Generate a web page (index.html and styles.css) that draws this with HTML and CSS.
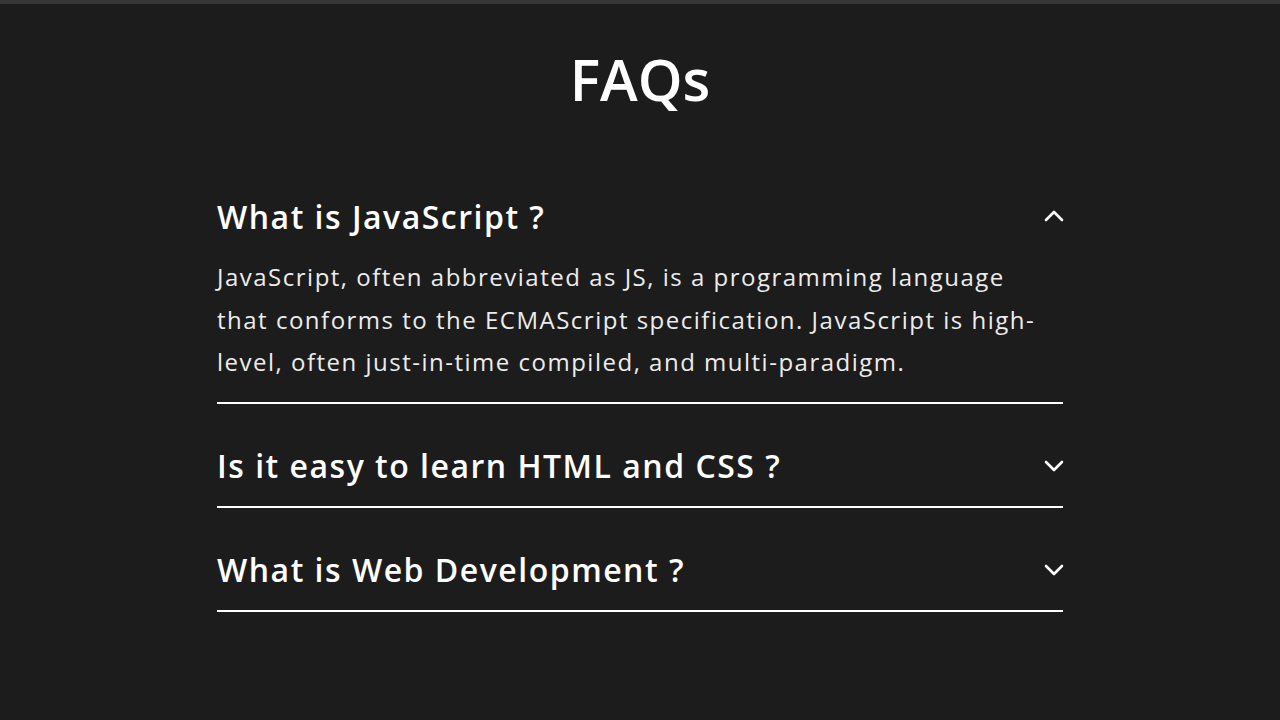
FILE: index.html
```html
<!DOCTYPE html>
<html lang="en">
<head>
    <meta charset="UTF-8">
    <meta name="viewport" content="width=device-width, initial-scale=1.0">
    <title>FAQs</title>
    <link rel="stylesheet" href="styles.css">
</head>
<body>

    <div class="container">
        <h1>FAQs</h1>

        <div class="faq-list">

            <!-- Abierta por defecto -->
            <div class="faq open">
                <div class="faq-question">
                    <h3>What is JavaScript ?</h3>
                    <svg class="chevron" viewBox="0 0 20 12" width="20" height="12">
                        <polyline points="2,10 10,2 18,10" />
                    </svg>
                </div>
                <p class="faq-answer">JavaScript, often abbreviated as JS, is a programming language that conforms to the ECMAScript specification. JavaScript is high-level, often just-in-time compiled, and multi-paradigm.</p>
            </div>

            <div class="faq">
                <div class="faq-question">
                    <h3>Is it easy to learn HTML and CSS ?</h3>
                    <svg class="chevron" viewBox="0 0 20 12" width="20" height="12">
                        <polyline points="2,2 10,10 18,2" />
                    </svg>
                </div>
                <p class="faq-answer">Yes. HTML and CSS are the building blocks of every web page and are a great place to start.</p>
            </div>

            <div class="faq">
                <div class="faq-question">
                    <h3>What is Web Development ?</h3>
                    <svg class="chevron" viewBox="0 0 20 12" width="20" height="12">
                        <polyline points="2,2 10,10 18,2" />
                    </svg>
                </div>
                <p class="faq-answer">Web development is the work involved in building websites and web applications for the internet.</p>
            </div>

        </div>
    </div>

</body>
</html>
```

FILE: styles.css
```css
body {
    margin: 0;
    padding: 0;
    font-family: 'Open Sans', sans-serif;
    background: #1c1c1c;
    border-top: 4px solid #37373a;
    color: #fff;
    min-height: 100vh;
    box-sizing: border-box;
}

.container {
    width: 846px;
    margin: 0 auto;
}

h1 {
    text-align: center;
    font-size: 57px;
    font-weight: 600;
    line-height: 67px;
    margin: 42px 0 41px;
}

.faq {
    border-bottom: 2px solid #fff;
    padding: 42px 0 20px;
}

.faq.open {
    padding-bottom: 18px;
}

.faq-question {
    display: flex;
    justify-content: space-between;
    align-items: center;
    height: 40px;
    cursor: pointer;
}

.faq-question h3 {
    margin: 0;
    font-size: 32px;
    font-weight: 600;
    letter-spacing: 1.5px;
}

.chevron {
    fill: none;
    stroke: #fff;
    stroke-width: 2.6;
    stroke-linecap: round;
    stroke-linejoin: round;
    margin-right: -1px;
}

.faq-answer {
    display: none;
    margin: 20px 0 0;
    font-size: 24px;
    line-height: 42.5px;
    letter-spacing: 1.5px;
    color: #ececec;
}

.faq.open .faq-answer {
    display: block;
}
```
